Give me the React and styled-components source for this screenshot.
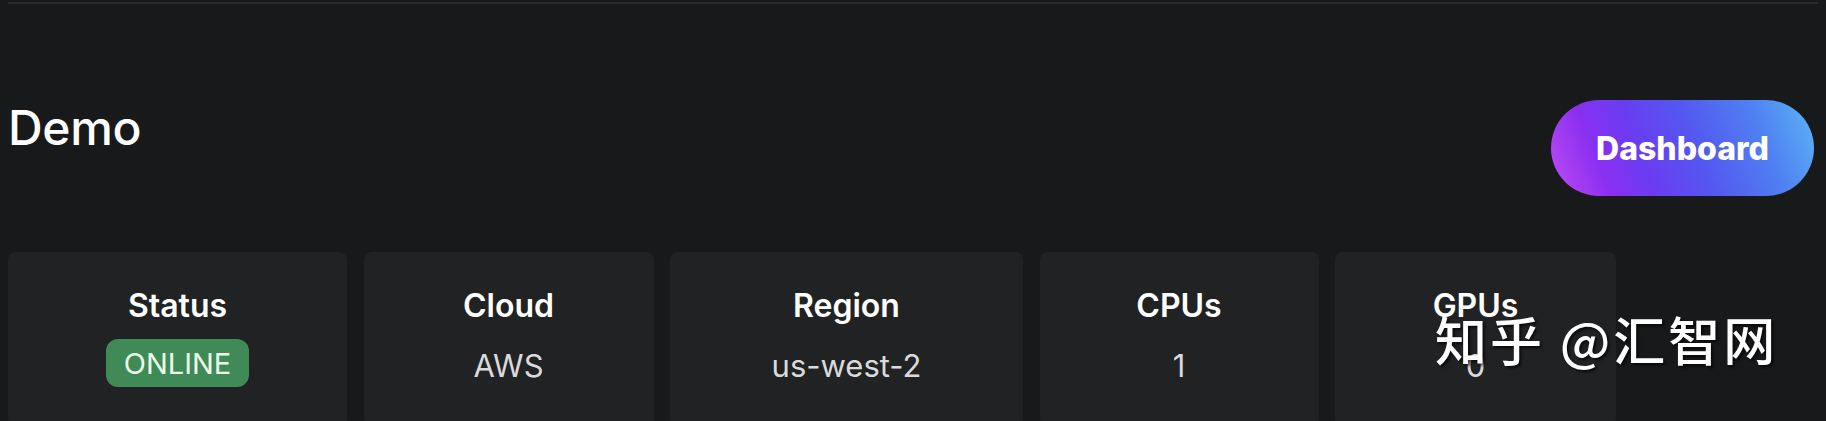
import React from "react";
import styled, { createGlobalStyle } from "styled-components";

const GlobalStyle = createGlobalStyle`
  html, body {
    margin: 0;
    background: #18191b;
    overflow: hidden;
    font-family: Inter, "Noto Sans", sans-serif;
  }
`;

const Page = styled.div`
  position: relative;
  padding: 2px 8px 0 8px;
  min-height: 421px;
  box-sizing: border-box;
`;

const Divider = styled.div`
  height: 2px;
  background: #292a2d;
`;

const Header = styled.div`
  display: flex;
  justify-content: space-between;
  align-items: flex-start;
  margin-top: 94px;
  padding-right: 4px;
`;

const Title = styled.h1`
  margin: 0;
  font-size: 48px;
  font-weight: 500;
  color: #ffffff;
  letter-spacing: -0.3px;
`;

const DashboardButton = styled.button`
  all: unset;
  cursor: pointer;
  box-sizing: border-box;
  margin-top: 2px;
  width: 263px;
  height: 96px;
  border-radius: 48px;
  display: flex;
  align-items: center;
  justify-content: center;
  font-family: Inter, sans-serif;
  font-size: 32px;
  font-weight: 800;
  color: #ffffff;
  background: linear-gradient(
    68deg,
    #c04cf3 0%,
    #8a2ff1 20%,
    #6a3cf1 35%,
    #5458f0 55%,
    #4f80f2 78%,
    #5cb6f7 100%
  );
`;

const Cards = styled.div`
  display: flex;
  gap: 16.5px;
  margin-top: 56px;
`;

const Card = styled.div`
  box-sizing: border-box;
  width: ${(p) => p.$w}px;
  flex: none;
  padding: 34px 0 40px;
  background: #212224;
  border-radius: 8px;
  display: flex;
  flex-direction: column;
  align-items: center;
`;

const Label = styled.div`
  font-size: 32px;
  font-weight: 600;
  color: #ffffff;
`;

const Value = styled.div`
  margin-top: 22px;
  font-size: 31px;
  font-weight: 400;
  color: #dadadc;
`;

const Badge = styled.div`
  margin-top: 14px;
  height: 48px;
  padding: 0 18px;
  box-sizing: border-box;
  display: flex;
  align-items: center;
  border-radius: 12px;
  background: #408a58;
  color: #eafbea;
  font-size: 29px;
  font-weight: 400;
`;

const Watermark = styled.div`
  position: absolute;
  left: 1435px;
  top: 313px;
  font-family: "Noto Sans CJK SC", sans-serif;
  font-size: 52px;
  line-height: 1;
  font-weight: 500;
  letter-spacing: 3px;
  color: #ffffff;
  white-space: pre;
  text-shadow: 2px 2px 3px rgba(0, 0, 0, 0.7);
`;

const stats = [
  { label: "Status", badge: "ONLINE", w: 339 },
  { label: "Cloud", value: "AWS", w: 290 },
  { label: "Region", value: "us-west-2", w: 353 },
  { label: "CPUs", value: "1", w: 279 },
  { label: "GPUs", value: "0", w: 281 },
];

const App = () => {
  return (
    <>
      <GlobalStyle />
      <Page>
        <Divider />
        <Header>
          <Title>Demo</Title>
          <DashboardButton>Dashboard</DashboardButton>
        </Header>
        <Cards>
          {stats.map((s) => (
            <Card key={s.label} $w={s.w}>
              <Label>{s.label}</Label>
              {s.badge ? <Badge>{s.badge}</Badge> : <Value>{s.value}</Value>}
            </Card>
          ))}
        </Cards>
        <Watermark>知乎 @汇智网</Watermark>
      </Page>
    </>
  );
};

export default App;
